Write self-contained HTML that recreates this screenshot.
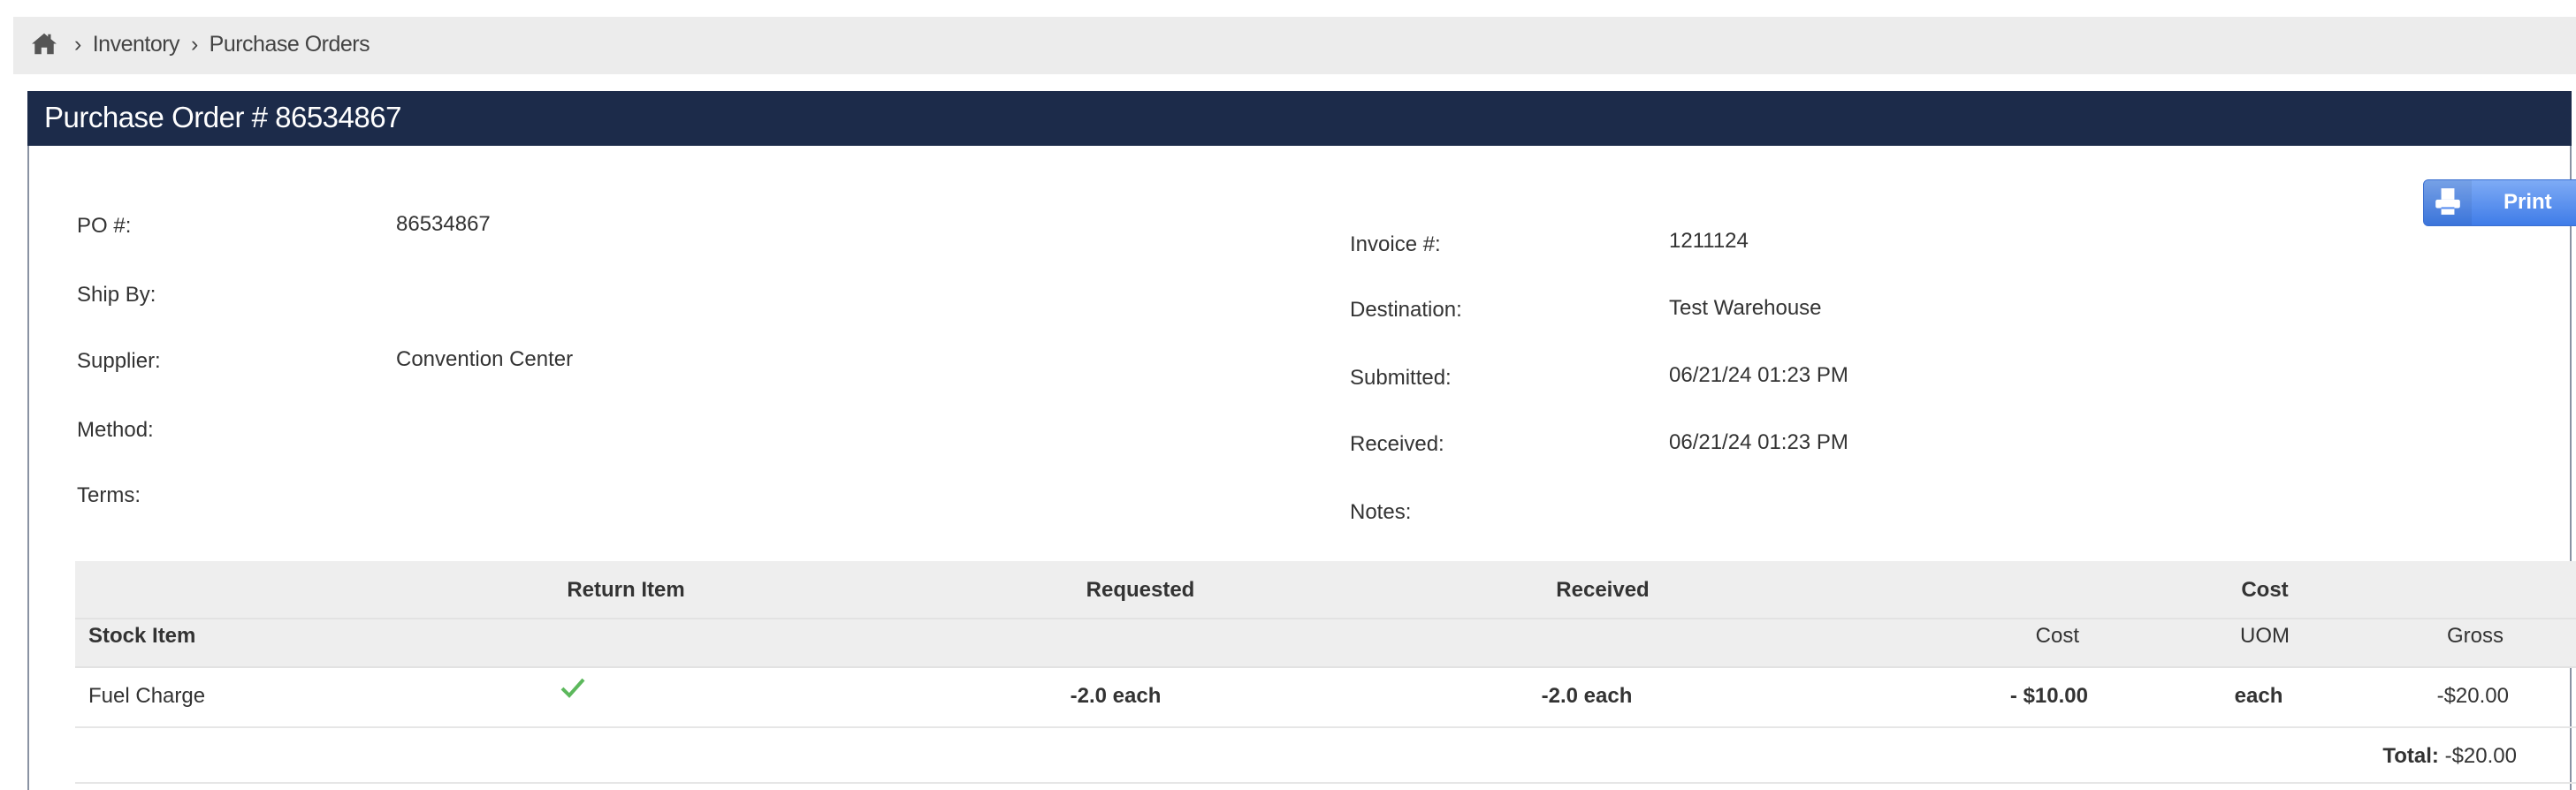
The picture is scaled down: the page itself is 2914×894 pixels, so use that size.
<!DOCTYPE html>
<html><head><meta charset="utf-8"><style>
*{margin:0;padding:0;box-sizing:border-box}
html{width:2914px;height:894px;overflow:hidden}
body{width:2914px;height:894px;background:#fff;font-family:"Liberation Sans",sans-serif;color:#333;position:relative;overflow:hidden;font-size:24px}
.a{position:absolute;white-space:nowrap}
.b{font-weight:bold}
</style></head><body>
<div class="a" style="left:15px;top:19px;width:2899px;height:65px;background:#ececec"></div>
<svg class="a" style="left:35px;top:36px" width="30" height="27" viewBox="0 0 28 24"><path d="M14 1 L1 12 L4 12 L4 23 L11 23 L11 16 L17 16 L17 23 L24 23 L24 12 L27 12 L21 7 L21 2 L18 2 L18 4.5 Z" fill="#555"/></svg>
<div class="a" style="left:84px;top:36px;font-size:25px;color:#444;letter-spacing:-0.5px">›&nbsp;&nbsp;Inventory&nbsp;&nbsp;›&nbsp;&nbsp;Purchase Orders</div>
<div class="a" style="left:31px;top:103px;width:2878px;height:791px;border:2px solid #8a93a3;border-bottom:none"></div>
<div class="a" style="left:31px;top:103px;width:2878px;height:62px;background:#1c2b4a"></div>
<div class="a" style="left:50px;top:114px;font-size:33px;color:#fff;letter-spacing:-0.5px">Purchase Order # 86534867</div>
<div class="a" style="left:87px;top:242px">PO #:</div>
<div class="a" style="left:448px;top:240px">86534867</div>
<div class="a" style="left:87px;top:320px">Ship By:</div>
<div class="a" style="left:87px;top:395px">Supplier:</div>
<div class="a" style="left:448px;top:393px">Convention Center</div>
<div class="a" style="left:87px;top:473px">Method:</div>
<div class="a" style="left:87px;top:547px">Terms:</div>
<div class="a" style="left:1527px;top:263px">Invoice #:</div>
<div class="a" style="left:1888px;top:259px">1211124</div>
<div class="a" style="left:1527px;top:337px">Destination:</div>
<div class="a" style="left:1888px;top:335px">Test Warehouse</div>
<div class="a" style="left:1527px;top:414px">Submitted:</div>
<div class="a" style="left:1888px;top:411px">06/21/24 01:23 PM</div>
<div class="a" style="left:1527px;top:489px">Received:</div>
<div class="a" style="left:1888px;top:487px">06/21/24 01:23 PM</div>
<div class="a" style="left:1527px;top:566px">Notes:</div>
<div class="a" style="left:2741px;top:203px;width:180px;height:53px;border-radius:6px;background:linear-gradient(#7eabf5,#3f7ce8);border:1px solid #3a6fd0"></div>
<div class="a" style="left:2742px;top:204px;width:54px;height:51px;border-radius:6px 0 0 6px;background:rgba(0,0,0,0.06)"></div>
<svg class="a" style="left:2753px;top:211px" width="32" height="34" viewBox="0 0 30 32"><rect x="8" y="2" width="14" height="12" fill="#fff"/><rect x="2" y="14" width="26" height="9" rx="2" fill="#fff"/><rect x="8" y="21" width="14" height="9" fill="#fff"/><rect x="8" y="22" width="14" height="2" fill="#5a8ff0"/></svg>
<div class="a b" style="left:2832px;top:215px;font-size:24px;color:#fff">Print</div>
<div class="a" style="left:85px;top:635px;width:2829px;height:119px;background:#eeeeee"></div>
<div class="a" style="left:85px;top:699px;width:2829px;height:2px;background:#e2e2e2"></div>
<div class="a" style="left:85px;top:754px;width:2829px;height:2px;background:#e2e2e2"></div>
<div class="a" style="left:85px;top:822px;width:2829px;height:2px;background:#e6e6e6"></div>
<div class="a" style="left:85px;top:885px;width:2829px;height:2px;background:#e6e6e6"></div>
<div class="a b" style="left:708px;top:654px;transform:translateX(-50%)">Return Item</div>
<div class="a b" style="left:1290px;top:654px;transform:translateX(-50%)">Requested</div>
<div class="a b" style="left:1813px;top:654px;transform:translateX(-50%)">Received</div>
<div class="a b" style="left:2562px;top:654px;transform:translateX(-50%)">Cost</div>
<div class="a b" style="left:100px;top:706px">Stock Item</div>
<div class="a" style="right:562px;top:706px">Cost</div>
<div class="a" style="left:2562px;top:706px;transform:translateX(-50%)">UOM</div>
<div class="a" style="right:82px;top:706px">Gross</div>
<div class="a" style="left:100px;top:774px">Fuel Charge</div>
<svg class="a" style="left:634px;top:766px" width="28" height="24" viewBox="0 0 28 24"><path d="M2 13 L10 21 L26 3" stroke="#5cb85c" stroke-width="4" fill="none"/></svg>
<div class="a b" style="left:1262px;top:774px;transform:translateX(-50%)">-2.0 each</div>
<div class="a b" style="left:1795px;top:774px;transform:translateX(-50%)">-2.0 each</div>
<div class="a b" style="right:552px;top:774px">- $10.00</div>
<div class="a b" style="left:2555px;top:774px;transform:translateX(-50%)">each</div>
<div class="a" style="right:76px;top:774px">-$20.00</div>
<div class="a" style="right:67px;top:842px"><b>Total:</b> -$20.00</div>
</body></html>
